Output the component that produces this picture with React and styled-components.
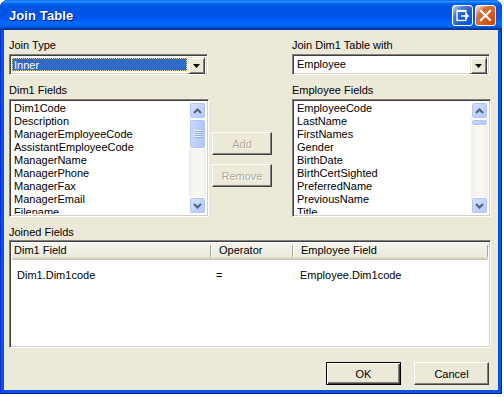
import React from 'react'
import styled, { createGlobalStyle, css } from 'styled-components'

const GlobalStyle = createGlobalStyle`
  html, body {
    margin: 0;
    padding: 0;
    background: #fff;
  }
  body {
    font-family: "Liberation Sans", Arial, sans-serif;
    font-size: 11px;
    color: #000;
  }
`

const sunken = css`
  box-sizing: border-box;
  border-style: solid;
  border-width: 1px;
  border-color: #808080 #fff #fff #808080;
  box-shadow: inset 1px 1px #404040, inset -1px -1px #d4d0c8;
`

const Window = styled.div`
  width: 502px;
  height: 394px;
  display: flex;
  flex-direction: column;
  background: #0553e4;
  border-radius: 8px 8px 0 0;
  box-shadow: inset 1px 0 #0831d9, inset -1px 0 #001ea0, inset 0 -1px #001ea0;
  overflow: hidden;
`

const TitleBar = styled.div`
  height: 30px;
  flex: none;
  display: flex;
  align-items: center;
  padding: 0 6px 0 9px;
  background: linear-gradient(180deg, #0058ee 0%, #3593ff 4%, #288eff 6%, #127dff 8%, #036ffc 10%,
    #0262ee 14%, #0057e5 20%, #0054e3 24%, #0055eb 56%, #005bf5 66%, #026afe 76%,
    #0062ef 86%, #0052d6 92%, #0040ab 94%, #003092 100%);
`

const Title = styled.div`
  flex: 1;
  color: #fff;
  font-weight: bold;
  font-size: 13px;
  letter-spacing: 0.1px;
  text-shadow: 1px 1px #0f1089;
  padding-top: 1px;
`

const TitleButtons = styled.div`
  display: flex;
  gap: 2px;
  padding-top: 1px;
`

const TitleButton = styled.div`
  width: 21px;
  height: 21px;
  box-sizing: border-box;
  border: 1px solid #fff;
  border-radius: 3px;
  display: flex;
  align-items: center;
  justify-content: center;
  background: ${p => p.$close
    ? 'radial-gradient(circle at 90% 90%, #cc4600 0%, #dc6527 55%, #cd7546 70%, #ffccb2 90%, #fff 100%)'
    : 'radial-gradient(circle at 90% 90%, #0054e9 0%, #2263d5 55%, #4479e4 70%, #a3bbec 90%, #fff 100%)'};
`

const Frame = styled.div`
  flex: 1;
  display: flex;
  padding: 0 4px 4px;
`

const Client = styled.div`
  flex: 1;
  background: #ece9d8;
  padding: 9px 7px 0 5px;
  display: flex;
  flex-direction: column;
`

const TopGrid = styled.div`
  display: grid;
  grid-template-columns: 200px 83px 199px;
  align-items: start;
`

const Label = styled.div`
  line-height: 13px;
  height: 13px;
  margin-top: ${p => p.$top || 0}px;
  white-space: nowrap;
`

const Combo = styled.div`
  ${sunken};
  width: ${p => p.$w}px;
  height: 21px;
  margin-top: 2px;
  padding: 2px;
  display: flex;
  background: #fff;
`

const ComboText = styled.div`
  flex: 1;
  margin: 1px 1px 1px 0;
  padding-left: 2px;
  line-height: 13px;
  box-sizing: border-box;
  ${p => p.$selected && css`
    background: #316ac5;
    color: #fff;
    border: 1px dotted #e8d37a;
    padding-left: 1px;
  `}
`

const ComboButton = styled.div`
  width: 17px;
  height: 17px;
  box-sizing: border-box;
  background: #ece9d8;
  border: 1px solid;
  border-color: #ece9d8 #404040 #404040 #ece9d8;
  box-shadow: inset 1px 1px #fff, inset -1px -1px #808080;
  display: flex;
  align-items: center;
  justify-content: center;
`

const ListBox = styled.div`
  ${sunken};
  width: ${p => p.$w}px;
  height: 118px;
  margin-top: 2px;
  padding: 2px;
  display: flex;
  background: #fff;
`

const Items = styled.div`
  flex: 1;
  overflow: hidden;
  padding: 0 0 0 2px;
`

const Item = styled.div`
  line-height: 13px;
  height: 13px;
  white-space: nowrap;
`

const ScrollBar = styled.div`
  width: 17px;
  display: flex;
  flex-direction: column;
  background: linear-gradient(90deg, #eeede5 0%, #f7f6f2 30%, #f7f6f2 70%, #f0efe8 100%);
`

const ScrollButton = styled.div`
  width: 17px;
  height: 17px;
  flex: none;
  box-sizing: border-box;
  border: 1px solid #fff;
  border-radius: 3px;
  background: linear-gradient(135deg, #dbe6fd 0%, #c5d5fc 45%, #b4c8f6 100%);
  box-shadow: inset 0 0 0 1px #b3c6f3;
  display: flex;
  align-items: center;
  justify-content: center;
`

const Track = styled.div`
  flex: 1;
  display: flex;
  flex-direction: column;
`

const Thumb = styled(ScrollButton)`
  height: ${p => p.$h}px;
  background: linear-gradient(90deg, #c9d8fc 0%, #bcd0fb 50%, #b0c6f6 100%);
`

const MiddleColumn = styled.div`
  grid-column: 2;
  grid-row: 4;
  display: flex;
  flex-direction: column;
  gap: 9px;
  padding: 35px 0 0 3px;
`

const PushButton = styled.button`
  box-sizing: border-box;
  width: ${p => p.$w}px;
  height: 23px;
  padding: 0;
  background: #ece9d8;
  font-family: "Liberation Sans", Arial, sans-serif;
  font-size: 11px;
  color: #000;
  border: 1px solid;
  border-color: #fff #404040 #404040 #fff;
  box-shadow: inset -1px -1px #808080;
  ${p => p.$default && css`
    border: 1px solid #000;
    box-shadow: inset 1px 1px #fff, inset -1px -1px #404040, inset -2px -2px #808080;
  `}
  &:disabled {
    color: #aca899;
    text-shadow: 1px 1px #fff;
  }
`

const ListView = styled.div`
  ${sunken};
  margin-top: 1px;
  width: 482px;
  height: 108px;
  padding: 2px;
  background: #fff;
`

const Columns = styled.div`
  display: grid;
  grid-template-columns: 199px 82px 1fr;
`

const Header = styled(Columns)`
  height: 17px;
  background: linear-gradient(180deg, #f6f5ee 0%, #ebeadb 80%, #d6d2c2 90%, #cbc7b8 100%);
`

const HeaderCell = styled.div`
  position: relative;
  line-height: 15px;
  padding-left: ${p => p.$pad}px;
  color: #000;
  &::after {
    content: '';
    position: absolute;
    right: 0;
    top: 2px;
    bottom: 3px;
    width: 1px;
    background: #aca899;
    box-shadow: 1px 0 #fff;
  }
`

const Row = styled(Columns)`
  margin-top: 9px;
  line-height: 13px;
`

const Cell = styled.div`
  padding-left: ${p => p.$pad}px;
  white-space: nowrap;
`

const Footer = styled.div`
  display: flex;
  justify-content: flex-end;
  gap: 13px;
  margin-top: 14px;
  padding-right: 2px;
`

const ChevronUp = () => (
  <svg width="9" height="6" viewBox="0 0 9 6">
    <polyline points="1,5 4.5,1.5 8,5" fill="none" stroke="#4d6185" strokeWidth="2" />
  </svg>
)

const ChevronDown = () => (
  <svg width="9" height="6" viewBox="0 0 9 6">
    <polyline points="1,1 4.5,4.5 8,1" fill="none" stroke="#4d6185" strokeWidth="2" />
  </svg>
)

const Grip = () => (
  <svg width="8" height="8" viewBox="0 0 8 8">
    {[0, 2, 4, 6].map(y => (
      <g key={y}>
        <rect x="0" y={y} width="7" height="1" fill="#eef3fe" />
        <rect x="1" y={y + 1} width="7" height="1" fill="#8caae6" />
      </g>
    ))}
  </svg>
)

const DropArrow = () => (
  <svg width="7" height="4" viewBox="0 0 7 4">
    <polygon points="0,0 7,0 3.5,4" fill="#000" />
  </svg>
)

const Scroller = ({ thumb }) => (
  <ScrollBar>
    <ScrollButton><ChevronUp /></ScrollButton>
    <Track>
      <Thumb $h={thumb}>{thumb > 12 && <Grip />}</Thumb>
    </Track>
    <ScrollButton><ChevronDown /></ScrollButton>
  </ScrollBar>
)

const dimFields = [
  'Dim1Code', 'Description', 'ManagerEmployeeCode', 'AssistantEmployeeCode',
  'ManagerName', 'ManagerPhone', 'ManagerFax', 'ManagerEmail', 'Filename',
]

const employeeFields = [
  'EmployeeCode', 'LastName', 'FirstNames', 'Gender', 'BirthDate',
  'BirthCertSighted', 'PreferredName', 'PreviousName', 'Title',
]

export default function App() {
  return (
    <>
      <GlobalStyle />
      <Window>
        <TitleBar>
          <Title>Join Table</Title>
          <TitleButtons>
            <TitleButton>
              <svg width="13" height="13" viewBox="0 0 13 13">
                <rect x="1" y="1.5" width="9" height="10" fill="none" stroke="#fff" strokeWidth="1.4" />
                <rect x="1" y="1" width="9" height="2" fill="#fff" />
                <line x1="5" y1="7" x2="12" y2="7" stroke="#fff" strokeWidth="1.6" />
                <polyline points="9.5,4.5 12,7 9.5,9.5" fill="none" stroke="#fff" strokeWidth="1.6" />
              </svg>
            </TitleButton>
            <TitleButton $close>
              <svg width="13" height="13" viewBox="0 0 13 13">
                <path d="M2 2 L11 11 M11 2 L2 11" stroke="#fff" strokeWidth="2.2" strokeLinecap="square" />
              </svg>
            </TitleButton>
          </TitleButtons>
        </TitleBar>
        <Frame>
          <Client>
            <TopGrid>
              <Label>Join Type</Label>
              <div />
              <Label>Join Dim1 Table with</Label>

              <Combo $w={199}>
                <ComboText $selected>Inner</ComboText>
                <ComboButton><DropArrow /></ComboButton>
              </Combo>
              <div />
              <Combo $w={198}>
                <ComboText>Employee</ComboText>
                <ComboButton><DropArrow /></ComboButton>
              </Combo>

              <Label $top={9}>Dim1 Fields</Label>
              <div />
              <Label $top={9}>Employee Fields</Label>

              <ListBox $w={200}>
                <Items>
                  {dimFields.map(f => <Item key={f}>{f}</Item>)}
                </Items>
                <Scroller thumb={30} />
              </ListBox>
              <MiddleColumn>
                <PushButton $w={60} disabled>Add</PushButton>
                <PushButton $w={60} disabled>Remove</PushButton>
              </MiddleColumn>
              <ListBox $w={199}>
                <Items>
                  {employeeFields.map(f => <Item key={f}>{f}</Item>)}
                </Items>
                <Scroller thumb={7} />
              </ListBox>
            </TopGrid>

            <Label $top={9}>Joined Fields</Label>
            <ListView>
              <Header>
                <HeaderCell $pad={2}>Dim1 Field</HeaderCell>
                <HeaderCell $pad={8}>Operator</HeaderCell>
                <HeaderCell $pad={8}>Employee Field</HeaderCell>
              </Header>
              <Row>
                <Cell $pad={5}>Dim1.Dim1code</Cell>
                <Cell $pad={5}>=</Cell>
                <Cell $pad={7}>Employee.Dim1code</Cell>
              </Row>
            </ListView>

            <Footer>
              <PushButton $w={75} $default>OK</PushButton>
              <PushButton $w={75}>Cancel</PushButton>
            </Footer>
          </Client>
        </Frame>
      </Window>
    </>
  )
}
